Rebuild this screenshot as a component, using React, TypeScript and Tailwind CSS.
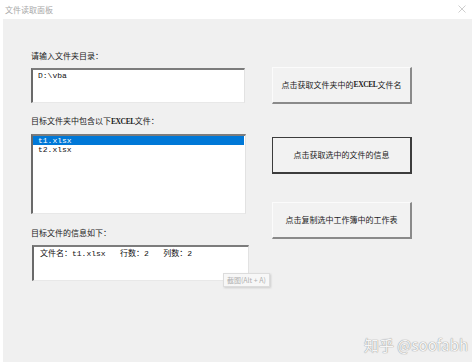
import React from "react";

const sans = "font-['Noto_Sans_CJK_SC',sans-serif]";
const mono = "font-['Liberation_Mono','Noto_Sans_CJK_SC',monospace]";

function Label({ children }: { children: React.ReactNode }) {
  return (
    <div className={`${sans} text-[8px] leading-[11px] text-[#1b1b1b] whitespace-nowrap`}>
      {children}
    </div>
  );
}

function Excel() {
  return (
    <span className="font-['Liberation_Serif',serif] font-bold text-[7.5px] tracking-[-0.4px]">EXCEL</span>
  );
}

function Button({ children, focused }: { children: React.ReactNode; focused?: boolean }) {
  return (
    <div
      className={
        "h-[37px] w-[140px] flex items-center justify-center bg-[#f2f2f2] text-[8px] text-[#222] whitespace-nowrap " +
        sans +
        (focused
          ? " border border-[#3c3c3c] border-r-2 border-b-2"
          : " border-t border-l border-t-[#fbfbfb] border-l-[#fbfbfb] border-r-2 border-b-2 border-r-[#8a8a8a] border-b-[#8a8a8a]")
      }
    >
      {children}
    </div>
  );
}

export default function App() {
  return (
    <div className="relative w-[474px] h-[364px] bg-white overflow-hidden">
      {/* title bar */}
      <div className="h-[19px] flex items-center justify-between pl-[5px] pr-[8px]">
        <span className={`${sans} text-[8px] text-[#a8a8a8]`}>文件读取面板</span>
        <svg width="8" height="8" viewBox="0 0 8 8" className="mb-[2px]">
          <path d="M0.5 0.5L7.5 7.5M7.5 0.5L0.5 7.5" stroke="#c8c8c8" strokeWidth="0.9" />
        </svg>
      </div>

      {/* panel */}
      <div className="ml-[3px] mr-[2px] h-[343px] bg-[#f0f0f0] flex pt-[31px] pl-[28px]">
        {/* left column */}
        <div className="w-[218px] flex flex-col">
          <Label>请输入文件夹目录：</Label>
          <div className="mt-[7px] h-[35px] w-[214px] bg-white border-t-2 border-l-2 border-t-[#7c7c7c] border-l-[#6a6a6a] border-r border-b border-r-[#e2e2e2] border-b-[#e8e8e8] pl-[5px] pt-[1px]">
            <div className={`${mono} text-[8px] leading-[10px] text-[#111]`}>D:\vba</div>
          </div>

          <div className="mt-[12px]">
            <Label>
              目标文件夹中包含以下<Excel />文件：
            </Label>
          </div>
          <div className="mt-[7px] h-[80px] w-[215px] bg-white border-t-2 border-l-2 border-t-[#7c7c7c] border-l-[#6a6a6a] border-r border-b border-r-[#e2e2e2] border-b-[#e8e8e8] pr-[1px]">
            <div className={`${mono} h-[9px] bg-[#0078d7] text-white text-[8px] leading-[9px] pl-[5px]`}>
              t1.xlsx
            </div>
            <div className={`${mono} h-[9px] text-[#111] text-[8px] leading-[9px] pl-[5px]`}>t2.xlsx</div>
          </div>

          <div className="mt-[13px]">
            <Label>目标文件的信息如下：</Label>
          </div>
          <div className="mt-[7px] ml-[1px] h-[36px] w-[217px] bg-white border-t-2 border-l-2 border-t-[#7c7c7c] border-l-[#6a6a6a] border-r border-b border-r-[#e2e2e2] border-b-[#e8e8e8] pl-[6px] pt-[1px]">
            <div className={`${mono} text-[8px] leading-[11px] text-[#111] whitespace-pre`}>
              文件名：t1.xlsx   行数：2   列数：2
            </div>
          </div>
        </div>

        {/* right column */}
        <div className="ml-[23px] pt-[17px] flex flex-col">
          <Button>
            点击获取文件夹中的<Excel />文件名
          </Button>
          <div className="mt-[33px]">
            <Button focused>点击获取选中的文件的信息</Button>
          </div>
          <div className="mt-[28px]">
            <Button>点击复制选中工作簿中的工作表</Button>
          </div>
        </div>
      </div>

      {/* tooltip */}
      <div
        className={`absolute left-[223px] top-[273px] h-[14px] px-[3px] flex items-center bg-[#f7f7f7] border border-[#dcdcdc] shadow-[1px_1px_2px_rgba(0,0,0,0.15)] ${sans} text-[7px] text-[#b0b0b0] whitespace-nowrap`}
      >
        截图(Alt + A)
      </div>

      {/* watermark */}
      <div
        className={`absolute left-[364px] top-[335px] ${sans} text-[15px] leading-[20px] text-[#f6f6f6] whitespace-nowrap [text-shadow:0_0_1px_#999999,0_0_1px_#999999]`}
      >
        知乎 @soofabh
      </div>
    </div>
  );
}
